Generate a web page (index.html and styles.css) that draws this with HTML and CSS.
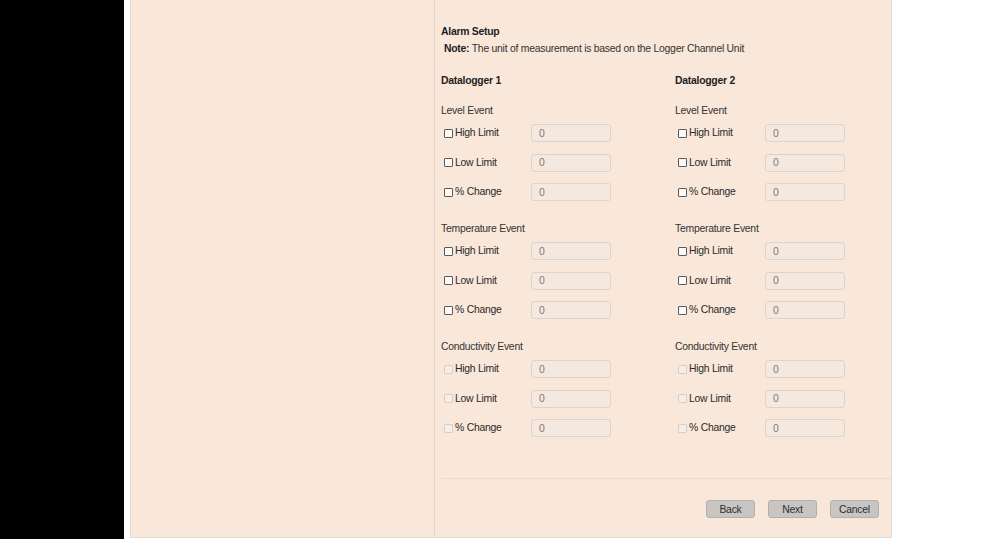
FILE: index.html
```html
<!DOCTYPE html>
<html>
<head>
<meta charset="utf-8">
<link rel="stylesheet" href="styles.css">
</head>
<body>
<div class="page">
  <aside class="sidebar"></aside>
  <main class="panel">
    <div class="left"></div>
    <section class="content">
      <h2 class="title">Alarm Setup</h2>
      <p class="note"><b>Note:</b> The unit of measurement is based on the Logger Channel Unit</p>
      <div class="cols">
        <div class="col">
          <h3 class="logger">Datalogger 1</h3>
          <div class="group">
            <div class="ghead">Level Event</div>
            <div class="row"><label class="lbl"><input type="checkbox" class="cb">High Limit</label><input class="num" type="text" value="0" disabled></div>
            <div class="row"><label class="lbl"><input type="checkbox" class="cb">Low Limit</label><input class="num" type="text" value="0" disabled></div>
            <div class="row"><label class="lbl"><input type="checkbox" class="cb">% Change</label><input class="num" type="text" value="0" disabled></div>
          </div>
          <div class="group">
            <div class="ghead">Temperature Event</div>
            <div class="row"><label class="lbl"><input type="checkbox" class="cb">High Limit</label><input class="num" type="text" value="0" disabled></div>
            <div class="row"><label class="lbl"><input type="checkbox" class="cb">Low Limit</label><input class="num" type="text" value="0" disabled></div>
            <div class="row"><label class="lbl"><input type="checkbox" class="cb">% Change</label><input class="num" type="text" value="0" disabled></div>
          </div>
          <div class="group">
            <div class="ghead">Conductivity Event</div>
            <div class="row"><label class="lbl"><input type="checkbox" class="cb" disabled>High Limit</label><input class="num" type="text" value="0" disabled></div>
            <div class="row"><label class="lbl"><input type="checkbox" class="cb" disabled>Low Limit</label><input class="num" type="text" value="0" disabled></div>
            <div class="row"><label class="lbl"><input type="checkbox" class="cb" disabled>% Change</label><input class="num" type="text" value="0" disabled></div>
          </div>
        </div>
        <div class="col">
          <h3 class="logger">Datalogger 2</h3>
          <div class="group">
            <div class="ghead">Level Event</div>
            <div class="row"><label class="lbl"><input type="checkbox" class="cb">High Limit</label><input class="num" type="text" value="0" disabled></div>
            <div class="row"><label class="lbl"><input type="checkbox" class="cb">Low Limit</label><input class="num" type="text" value="0" disabled></div>
            <div class="row"><label class="lbl"><input type="checkbox" class="cb">% Change</label><input class="num" type="text" value="0" disabled></div>
          </div>
          <div class="group">
            <div class="ghead">Temperature Event</div>
            <div class="row"><label class="lbl"><input type="checkbox" class="cb">High Limit</label><input class="num" type="text" value="0" disabled></div>
            <div class="row"><label class="lbl"><input type="checkbox" class="cb">Low Limit</label><input class="num" type="text" value="0" disabled></div>
            <div class="row"><label class="lbl"><input type="checkbox" class="cb">% Change</label><input class="num" type="text" value="0" disabled></div>
          </div>
          <div class="group">
            <div class="ghead">Conductivity Event</div>
            <div class="row"><label class="lbl"><input type="checkbox" class="cb" disabled>High Limit</label><input class="num" type="text" value="0" disabled></div>
            <div class="row"><label class="lbl"><input type="checkbox" class="cb" disabled>Low Limit</label><input class="num" type="text" value="0" disabled></div>
            <div class="row"><label class="lbl"><input type="checkbox" class="cb" disabled>% Change</label><input class="num" type="text" value="0" disabled></div>
          </div>
        </div>
      </div>
      <hr class="sep">
      <div class="actions">
        <button class="btn">Back</button>
        <button class="btn">Next</button>
        <button class="btn">Cancel</button>
      </div>
    </section>
  </main>
</div>
</body>
</html>
```

FILE: styles.css
```css
* { box-sizing: border-box; }
html, body {
  margin: 0;
  padding: 0;
  width: 1000px;
  height: 539px;
  overflow: hidden;
  background: #ffffff;
  font-family: "Liberation Sans", Arial, sans-serif;
  font-size: 10.4px;
  letter-spacing: -0.25px;
  color: #262626;
}
.page {
  display: flex;
  height: 539px;
}
.sidebar {
  width: 124px;
  flex: none;
  background: #000;
}
.panel {
  margin-left: 6px;
  width: 762px;
  height: 538px;
  flex: none;
  display: flex;
  background: #f9e7d9;
  border-left: 1px solid #e4dbd3;
  border-right: 1px solid #e4dbd3;
  border-bottom: 1px solid #e2d9d1;
}
.left {
  width: 304px;
  flex: none;
  border-right: 1px solid #e6d4c4;
}
.content {
  flex: 1;
  min-width: 0;
  padding: 25px 0 0 6px;
  display: flex;
  flex-direction: column;
}
.title {
  margin: 0;
  font-size: 10.4px;
  font-weight: bold;
  line-height: 14px;
  color: #1e1e1e;
}
.note {
  margin: 3px 0 0 3px;
  line-height: 14px;
  color: #333;
}
.note b { color: #1e1e1e; }
.cols {
  display: flex;
  margin-top: 18px;
}
.col {
  width: 234px;
  flex: none;
}
.col:last-child {
  flex: 1;
  width: auto;
}
.logger {
  margin: 0;
  font-size: 10.4px;
  font-weight: bold;
  line-height: 14px;
  color: #1e1e1e;
}
.group {
  margin-top: 16px;
}
.group + .group {
  margin-top: 21px;
}
.ghead {
  line-height: 14px;
  color: #333;
  margin-bottom: 6px;
}
.row {
  display: flex;
  align-items: center;
  height: 18px;
}
.row + .row {
  margin-top: 11.5px;
}
.lbl {
  width: 90px;
  flex: none;
  display: flex;
  align-items: center;
  color: #2a2a2a;
  line-height: 14px;
}
.cb {
  appearance: none;
  -webkit-appearance: none;
  width: 9px;
  height: 9px;
  margin: 0 2px 0 3px;
  border: 1px solid #5a5a5a;
  border-radius: 1px;
  background: #fdfbf9;
  flex: none;
}
.cb:disabled {
  border-color: #d6cfc9;
  background: #f5efe9;
}
.num {
  width: 80px;
  height: 18px;
  padding: 0 7px;
  margin: 0;
  border: 1px solid #ddd3ca;
  border-radius: 3px;
  background: #f5e9df;
  font-family: "Liberation Sans", Arial, sans-serif;
  font-size: 10.4px;
  color: #7a7a7a;
  -webkit-text-fill-color: #7a7a7a;
  opacity: 1;
}
.sep {
  margin: 41px 0 0 0;
  border: 0;
  border-top: 1px solid #eadacb;
  height: 0;
}
.actions {
  display: flex;
  justify-content: flex-end;
  gap: 13px;
  padding-right: 12px;
  margin-top: 21px;
}
.btn {
  width: 49px;
  height: 18px;
  padding: 0;
  border: 1px solid #b3afab;
  border-radius: 3px;
  background: #c9c5c2;
  font-family: "Liberation Sans", Arial, sans-serif;
  font-size: 10.4px;
  letter-spacing: -0.25px;
  color: #2e2e2e;
}
```
